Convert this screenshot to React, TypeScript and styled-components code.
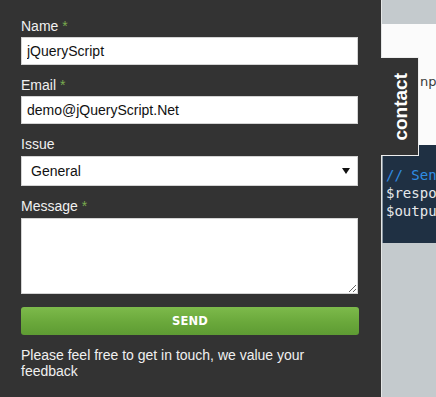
import React from "react";
import styled, { createGlobalStyle } from "styled-components";

const Global = createGlobalStyle`
  html, body, #root { margin: 0; padding: 0; height: 100%; }
  body { background: #c4cacd; font-family: "Liberation Sans", Arial, sans-serif; }
  * { box-sizing: border-box; }
`;

const Page = styled.div`
  position: relative;
  display: flex;
  height: 100vh;
  overflow: hidden;
`;

const Panel = styled.div`
  width: 382px;
  flex: none;
  background: #333333;
  border-right: 1px solid #e4e6e6;
  padding: 18px 23px 0 21px;
  display: flex;
  flex-direction: column;
`;

const Field = styled.div<{ $gap?: number }>`
  display: flex;
  flex-direction: column;
  gap: ${(p) => p.$gap ?? 3}px;
  margin-bottom: 12px;
`;

const Label = styled.label`
  font-size: 14px;
  line-height: 16px;
  color: #f0f0f0;
`;

const Req = styled.span`
  color: #79ab4e;
`;

const TextInput = styled.input`
  width: 337px;
  height: 28px;
  border: 1px solid #d4d4d4;
  background: #fff;
  padding: 0 5px;
  font-family: "Liberation Sans", Arial, sans-serif;
  font-size: 14px;
  color: #111;
  outline: none;
`;

const SelectWrap = styled.div`
  position: relative;
  width: 337px;
`;

const Select = styled.select`
  width: 100%;
  height: 30px;
  appearance: none;
  border: 1px solid #d4d4d4;
  background: #fff;
  padding: 0 9px;
  font-family: "Liberation Sans", Arial, sans-serif;
  font-size: 14px;
  color: #111;
  outline: none;
  border-radius: 0;
`;

const Arrow = styled.svg`
  position: absolute;
  right: 8px;
  top: 12px;
  pointer-events: none;
`;

const TextArea = styled.textarea`
  width: 337px;
  height: 76px;
  border: 1px solid #d4d4d4;
  background: #fff;
  font-family: "Liberation Sans", Arial, sans-serif;
  font-size: 14px;
  outline: none;
  display: block;
`;

const SendButton = styled.button`
  margin-top: 1px;
  width: 338px;
  height: 28px;
  border: none;
  border-radius: 3px;
  background: linear-gradient(to bottom, #7dba4b 0%, #6aa83b 55%, #5e9b33 100%);
  color: #fff;
  font-family: "DejaVu Sans", Verdana, sans-serif;
  font-weight: bold;
  font-size: 11.5px;
  letter-spacing: 0.2px;
  cursor: pointer;
`;

const Note = styled.p`
  margin: 12px 0 0;
  font-size: 14px;
  line-height: 16px;
  color: #f0f0f0;
`;

const Backdrop = styled.div`
  flex: 1;
  display: flex;
  flex-direction: column;
  padding-top: 24px;
  background: #c4cacd;
`;

const Doc = styled.div`
  position: relative;
  height: 121px;
  background: #fbfbfb;
  clip-path: polygon(0 0, calc(100% - 12px) 0, 100% 20px, 100% 100%, 0 100%);
  padding: 50px 0 0 38px;
  font-family: "DejaVu Sans", sans-serif;
  font-size: 13px;
  color: #3a3a3a;
`;

const Fold = styled.div`
  position: absolute;
  right: 0;
  top: 0;
  width: 12px;
  height: 20px;
  background: linear-gradient(239deg, #c4cacd 50%, #d9dcde 50%, #f2f2f2 100%);
`;

const Code = styled.pre`
  margin: 0;
  height: 98px;
  background: #1f3043;
  border-left: 1px solid #8a97a3;
  padding: 21px 0 0 3px;
  font-family: "DejaVu Sans Mono", monospace;
  font-size: 14px;
  line-height: 18px;
  color: #e6e8ea;
  overflow: hidden;
  white-space: pre;
`;

const Comment = styled.span`
  color: #2f8de4;
`;

const Tab = styled.div`
  position: absolute;
  left: 381px;
  top: 57px;
  width: 38px;
  height: 99px;
  background: #333333;
  border: 1px solid #eeeeee;
  border-left: none;
  display: flex;
  align-items: center;
  justify-content: center;
`;

const TabText = styled.span`
  writing-mode: vertical-rl;
  transform: rotate(180deg);
  font-family: "Liberation Sans", Arial, sans-serif;
  font-weight: bold;
  font-size: 19px;
  color: #ffffff;
  line-height: 1;
  margin-left: 1px;
`;

export default function App() {
  return (
    <>
      <Global />
      <Page>
        <Panel>
          <Field>
            <Label>
              Name <Req>*</Req>
            </Label>
            <TextInput defaultValue="jQueryScript" spellCheck={false} />
          </Field>
          <Field>
            <Label>
              Email <Req>*</Req>
            </Label>
            <TextInput defaultValue="demo@jQueryScript.Net" spellCheck={false} />
          </Field>
          <Field $gap={4}>
            <Label>Issue</Label>
            <SelectWrap>
              <Select defaultValue="General">
                <option>General</option>
                <option>Support</option>
                <option>Feedback</option>
              </Select>
              <Arrow width="8" height="6" viewBox="0 0 8 6">
                <path d="M0 0 H8 L4 6 Z" fill="#111" />
              </Arrow>
            </SelectWrap>
          </Field>
          <Field $gap={4}>
            <Label>
              Message <Req>*</Req>
            </Label>
            <TextArea />
          </Field>
          <SendButton>SEND</SendButton>
          <Note>Please feel free to get in touch, we value your feedback</Note>
        </Panel>
        <Backdrop>
          <Doc>
            np
            <Fold />
          </Doc>
          <Code>
            <Comment>// Send</Comment>
            {"\n$response\n$output"}
          </Code>
        </Backdrop>
        <Tab>
          <TabText>contact</TabText>
        </Tab>
      </Page>
    </>
  );
}
